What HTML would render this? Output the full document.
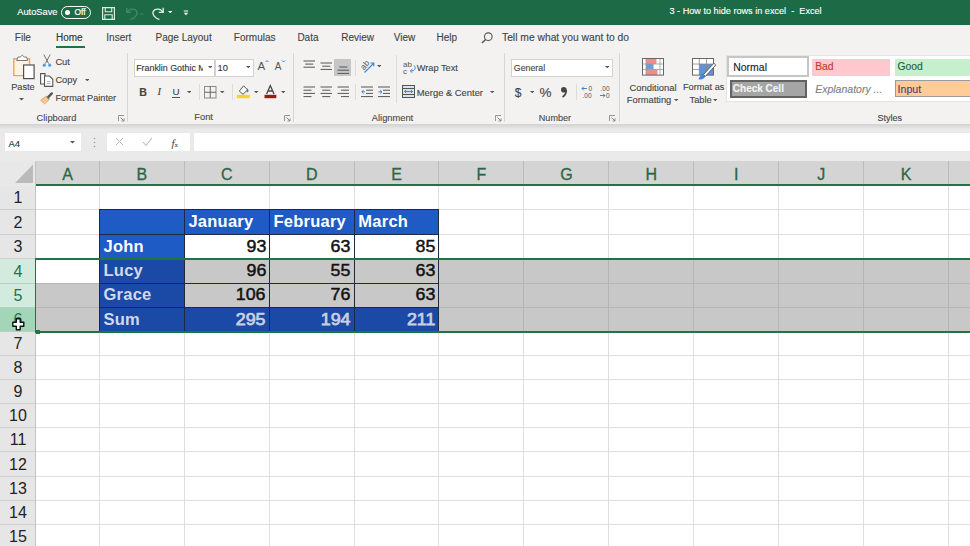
<!DOCTYPE html>
<html><head><meta charset="utf-8"><style>
*{margin:0;padding:0;box-sizing:border-box}
html,body{width:970px;height:546px;overflow:hidden;background:#f3f2f1;font-family:"Liberation Sans",sans-serif}
body{position:relative}
.a{position:absolute}
.t{position:absolute;white-space:nowrap;line-height:1}
</style></head><body>
<div class="a" style="left:0;top:0;width:970px;height:25.3px;background:#1d6b46"></div>
<div class="a" style="left:0;top:123.7px;width:970px;height:5px;background:linear-gradient(#d3d3d3,#dcdcdc 50%,#e8e8e8)"></div>
<div class="a" style="left:0;top:128.7px;width:970px;height:32.3px;background:#eaeaea"></div>
<div class="t" style="left:17.2px;top:8.13px;font-size:9.3px;color:#fff;font-weight:normal;font-style:normal;-webkit-text-stroke:0.12px #fff;">AutoSave</div>
<div class="a" style="left:61px;top:5.5px;width:30px;height:13.5px;border:1.2px solid #fff;border-radius:7px"></div>
<div class="a" style="left:65.2px;top:9.8px;width:5.2px;height:5.2px;border-radius:50%;background:#fff"></div>
<div class="t" style="left:74.6px;top:8.49px;font-size:8.4px;color:#fff;font-weight:normal;font-style:normal;-webkit-text-stroke:0.12px #fff;-webkit-text-stroke:0.2px #fff">Off</div>
<svg class="a" style="left:102px;top:7px" width="14" height="14"><path d="M0.6,0.6 H12.4 V12.4 H0.6 Z" fill="none" stroke="#dcebe2" stroke-width="1.2"/><path d="M3.3,0.6 V4.8 H9.7 V0.6 M2.8,12.4 V7.8 H10.2 V12.4" fill="none" stroke="#dcebe2" stroke-width="1.1"/></svg>
<svg class="a" style="left:125px;top:6px" width="21" height="15"><path d="M2.2,6 C4,2.5 10,2 11.8,5.5 C13,8.5 10,12 5.5,13.5" fill="none" stroke="#3f8d64" stroke-width="1.3"/><path d="M1.8,2 V6.4 H6" fill="none" stroke="#3f8d64" stroke-width="1.3"/><path d="M15,8 h3.5" stroke="#3f8d64" stroke-width="1"/></svg>
<svg class="a" style="left:152px;top:6px" width="14" height="15"><path d="M10.8,6 C9,2.5 3,2 1.2,5.5 C0,8.5 3,12 7.5,13.5" fill="none" stroke="#e6f0ea" stroke-width="1.3"/><path d="M11.2,1.8 V6.4 H6.8" fill="none" stroke="#e6f0ea" stroke-width="1.3"/></svg>
<svg class="a" style="left:167.75px;top:11.075px" width="4.5" height="2.25"><polygon points="0,0 4.5,0 2.25,2.25" fill="#fff"/></svg>
<svg class="a" style="left:182.5px;top:9.5px" width="6" height="6"><path d="M0.8,1 H5.2" stroke="#fff" stroke-width="1"/><polygon points="0.8,2.8 5.2,2.8 3,5.3" fill="#fff"/></svg>
<div class="t" style="left:669.5px;top:7.45px;font-size:9.15px;color:#fff;font-weight:normal;font-style:normal;-webkit-text-stroke:0.12px #fff;">3 - How to hide rows in excel&nbsp; -&nbsp; Excel</div>
<div class="t" style="left:14.8px;top:33.33px;font-size:10px;color:#444;font-weight:normal;font-style:normal;-webkit-text-stroke:0.12px #444;">File</div>
<div class="t" style="left:56.0px;top:33.33px;font-size:10px;color:#333;font-weight:normal;font-style:normal;-webkit-text-stroke:0.12px #333;">Home</div>
<div class="t" style="left:106.3px;top:33.33px;font-size:10px;color:#444;font-weight:normal;font-style:normal;-webkit-text-stroke:0.12px #444;">Insert</div>
<div class="t" style="left:155.5px;top:33.33px;font-size:10px;color:#444;font-weight:normal;font-style:normal;-webkit-text-stroke:0.12px #444;">Page Layout</div>
<div class="t" style="left:233.8px;top:33.33px;font-size:10px;color:#444;font-weight:normal;font-style:normal;-webkit-text-stroke:0.12px #444;">Formulas</div>
<div class="t" style="left:297.4px;top:33.33px;font-size:10px;color:#444;font-weight:normal;font-style:normal;-webkit-text-stroke:0.12px #444;">Data</div>
<div class="t" style="left:341.3px;top:33.33px;font-size:10px;color:#444;font-weight:normal;font-style:normal;-webkit-text-stroke:0.12px #444;">Review</div>
<div class="t" style="left:393.8px;top:33.33px;font-size:10px;color:#444;font-weight:normal;font-style:normal;-webkit-text-stroke:0.12px #444;">View</div>
<div class="t" style="left:436.5px;top:33.33px;font-size:10px;color:#444;font-weight:normal;font-style:normal;-webkit-text-stroke:0.12px #444;">Help</div>
<div class="a" style="left:56px;top:45.6px;width:29px;height:2px;background:#217346"></div>
<svg class="a" style="left:481px;top:32px" width="12" height="12"><circle cx="7.3" cy="4.7" r="3.8" fill="none" stroke="#555" stroke-width="1.1"/><path d="M4.6,7.4 L1,11" stroke="#555" stroke-width="1.4"/></svg>
<div class="t" style="left:502.0px;top:33.08px;font-size:10.3px;color:#444;font-weight:normal;font-style:normal;-webkit-text-stroke:0.12px #444;">Tell me what you want to do</div>
<svg class="a" style="left:12px;top:54px" width="24" height="26"><rect x="1.8" y="4.8" width="15.7" height="16.8" fill="#fdf3e3"/><path d="M11.5,21.6 H1.8 V4.8 H17.5 V11" fill="none" stroke="#f0a850" stroke-width="1.4"/><path d="M4.7,6.5 L6,3 H8.3 L10.3,1.2 L12.3,3 H14.5 L15.5,6.5 Z" fill="#fff" stroke="#777" stroke-width="1"/><rect x="11.6" y="11" width="10.5" height="13.6" fill="#fff" stroke="#505050" stroke-width="1.2"/></svg>
<div class="t" style="left:11.2px;top:82.71px;font-size:9.2px;color:#444;font-weight:normal;font-style:normal;-webkit-text-stroke:0.12px #444;">Paste</div>
<svg class="a" style="left:19.0px;top:98.05px" width="5" height="2.5"><polygon points="0,0 5,0 2.5,2.5" fill="#555"/></svg>
<svg class="a" style="left:41px;top:54px" width="12" height="14"><path d="M2.8,0.5 L7.6,9.5 M9.2,0.5 L4.4,9.5" stroke="#666" stroke-width="0.9"/><circle cx="3.3" cy="11.2" r="1.6" fill="#5b9bdc"/><circle cx="8.7" cy="11.2" r="1.6" fill="#5b9bdc"/></svg>
<div class="t" style="left:55.4px;top:57.53px;font-size:9.3px;color:#444;font-weight:normal;font-style:normal;-webkit-text-stroke:0.12px #444;">Cut</div>
<svg class="a" style="left:39.5px;top:73px" width="14" height="14"><path d="M0.6,0.6 H5 V11 H0.6 Z" fill="#fff" stroke="#555" stroke-width="1.1"/><path d="M4.5,3 H9.5 L12.8,6.3 V13.4 H4.5 Z" fill="#fff" stroke="#555" stroke-width="1.1"/><path d="M7,8.5 h3.5 M7,10.5 h3.5" stroke="#999" stroke-width="0.8"/></svg>
<div class="t" style="left:55.4px;top:76.03px;font-size:9.3px;color:#444;font-weight:normal;font-style:normal;-webkit-text-stroke:0.12px #444;">Copy</div>
<svg class="a" style="left:84.55px;top:79.175px" width="4.5" height="2.25"><polygon points="0,0 4.5,0 2.25,2.25" fill="#555"/></svg>
<svg class="a" style="left:40.3px;top:91.5px" width="14" height="13"><path d="M8.2,5.2 L11.8,1.4" stroke="#555" stroke-width="2.4" stroke-linecap="round"/><path d="M6.4,4.6 L9.2,7.4" stroke="#777" stroke-width="1.6"/><path d="M0.6,8.3 L5.6,4.4 L9,7.8 L4.6,12 Z" fill="#f5b676" stroke="#e69a50" stroke-width="0.6"/><path d="M2.6,9.2 L6.2,6.2 M4.2,10.6 L7.4,7.6" stroke="#fff3e6" stroke-width="0.8"/></svg>
<div class="t" style="left:55.4px;top:94.41px;font-size:9.2px;color:#444;font-weight:normal;font-style:normal;-webkit-text-stroke:0.12px #444;">Format Painter</div>
<div class="t" style="left:36.6px;top:113.63px;font-size:9.3px;color:#4a4a4a;font-weight:normal;font-style:normal;-webkit-text-stroke:0.12px #4a4a4a;">Clipboard</div>
<svg class="a" style="left:117.5px;top:114.5px" width="7" height="7"><path d="M0.5,6 V0.5 H6" fill="none" stroke="#8a8a8a" stroke-width="0.9"/><path d="M2.5,2.5 L6,6 M3.5,6 H6 V3.5" fill="none" stroke="#8a8a8a" stroke-width="1"/></svg>
<div class="a" style="left:127px;top:53px;width:1px;height:69px;background:#d6d6d6"></div>
<div class="a" style="left:134px;top:58.6px;width:81px;height:18px;background:#fff;border:1px solid #d2d2d2"></div>
<div class="t" style="left:136.2px;top:63.97px;font-size:8.9px;color:#333;font-weight:normal;font-style:normal;-webkit-text-stroke:0.12px #333;width:67px;overflow:hidden">Franklin Gothic M</div>
<svg class="a" style="left:207.55px;top:66.375px" width="4.5" height="2.25"><polygon points="0,0 4.5,0 2.25,2.25" fill="#555"/></svg>
<div class="a" style="left:215px;top:58.6px;width:39px;height:18px;background:#fff;border:1px solid #d2d2d2"></div>
<div class="t" style="left:217.6px;top:63.63px;font-size:9.3px;color:#333;font-weight:normal;font-style:normal;-webkit-text-stroke:0.12px #333;">10</div>
<svg class="a" style="left:245.55px;top:66.375px" width="4.5" height="2.25"><polygon points="0,0 4.5,0 2.25,2.25" fill="#555"/></svg>
<svg class="a" style="left:257px;top:59px" width="30" height="13"><text x="0.5" y="11.3" font-family="Liberation Sans" font-size="11.5" fill="#555">A</text><path d="M8.5,3 L10,1.5 L11.5,3" fill="none" stroke="#3b86d9" stroke-width="1"/><text x="17.8" y="11.3" font-family="Liberation Sans" font-size="10" fill="#555">A</text><path d="M25,1.5 L26.5,3 L28,1.5" fill="none" stroke="#3b86d9" stroke-width="1"/></svg>
<div class="t" style="left:139.2px;top:86.83px;font-size:10.6px;color:#444;font-weight:bold;font-style:normal;-webkit-text-stroke:0.12px #444;">B</div>
<div class="t" style="left:157.4px;top:86.71px;font-size:10.5px;color:#444;font-weight:normal;font-style:italic;-webkit-text-stroke:0.12px #444;font-family:'Liberation Serif'">I</div>
<div class="t" style="left:172.4px;top:86.70px;font-size:9.8px;color:#444;font-weight:normal;font-style:normal;-webkit-text-stroke:0.12px #444;">U</div>
<div class="a" style="left:172.4px;top:97.2px;width:7.5px;height:1px;background:#555"></div>
<svg class="a" style="left:186.95px;top:90.875px" width="4.5" height="2.25"><polygon points="0,0 4.5,0 2.25,2.25" fill="#555"/></svg>
<div class="a" style="left:198.5px;top:84px;width:1px;height:16px;background:#dcdcdc"></div>
<svg class="a" style="left:203.5px;top:85.5px" width="13" height="13"><rect x="0.5" y="0.5" width="11.5" height="11.5" fill="none" stroke="#8a8a8a" stroke-width="1"/><path d="M6.25,0.5 V12 M0.5,6.25 H12" stroke="#666" stroke-width="1"/></svg>
<svg class="a" style="left:220.15px;top:90.875px" width="4.5" height="2.25"><polygon points="0,0 4.5,0 2.25,2.25" fill="#555"/></svg>
<div class="a" style="left:231.6px;top:84px;width:1px;height:16px;background:#dcdcdc"></div>
<svg class="a" style="left:236px;top:84px" width="15" height="15"><path d="M3.3,7.1 L7.6,1.8 L11.6,5.9 L7,10.3 Z" fill="#fff" stroke="#555" stroke-width="1"/><path d="M11.3,4.3 C12.8,6.3 12.9,7.7 11.8,8.3 C10.7,8.4 10.3,7.2 11.3,4.3 Z" fill="#3b6fd0"/><rect x="0.8" y="10.8" width="13" height="3.4" fill="#f3d530"/></svg>
<svg class="a" style="left:254.05px;top:90.875px" width="4.5" height="2.25"><polygon points="0,0 4.5,0 2.25,2.25" fill="#555"/></svg>
<svg class="a" style="left:263.5px;top:84px" width="14" height="15"><path d="M2.6,10 L6.3,1.6 L10,10 M3.9,7 H8.7" fill="none" stroke="#4a4a4a" stroke-width="1.35"/><rect x="0.5" y="10.8" width="11.8" height="3.4" fill="#9a1b12"/></svg>
<svg class="a" style="left:280.55px;top:90.875px" width="4.5" height="2.25"><polygon points="0,0 4.5,0 2.25,2.25" fill="#555"/></svg>
<div class="t" style="left:194.3px;top:113.33px;font-size:9.3px;color:#4a4a4a;font-weight:normal;font-style:normal;-webkit-text-stroke:0.12px #4a4a4a;">Font</div>
<svg class="a" style="left:283.8px;top:114.5px" width="7" height="7"><path d="M0.5,6 V0.5 H6" fill="none" stroke="#8a8a8a" stroke-width="0.9"/><path d="M2.5,2.5 L6,6 M3.5,6 H6 V3.5" fill="none" stroke="#8a8a8a" stroke-width="1"/></svg>
<div class="a" style="left:293px;top:53px;width:1px;height:69px;background:#d6d6d6"></div>
<svg class="a" style="left:303px;top:60px" width="12.5" height="11.3"><path d="M0.5,1.0 h11.5" stroke="#555" stroke-width="1"/><path d="M2.25,4.1 h8" stroke="#555" stroke-width="1"/><path d="M0.5,7.2 h11.5" stroke="#555" stroke-width="1"/></svg>
<svg class="a" style="left:319.8px;top:62px" width="12.5" height="11.600000000000001"><path d="M0.5,1.0 h11.5" stroke="#555" stroke-width="1"/><path d="M2.25,4.2 h8" stroke="#555" stroke-width="1"/><path d="M0.5,7.4 h11.5" stroke="#555" stroke-width="1"/></svg>
<div class="a" style="left:334px;top:59px;width:17px;height:17px;background:#c6c6c6"></div>
<svg class="a" style="left:337px;top:65.5px" width="12.5" height="11.600000000000001"><path d="M2.25,1.0 h8" stroke="#555" stroke-width="1"/><path d="M0.5,4.2 h11.5" stroke="#555" stroke-width="1"/><path d="M0.5,7.4 h11.5" stroke="#555" stroke-width="1"/></svg>
<div class="a" style="left:354.6px;top:60px;width:1px;height:16px;background:#dcdcdc"></div>
<svg class="a" style="left:359px;top:58px" width="18" height="16"><text x="1" y="10" font-family="Liberation Sans" font-size="8.5" fill="#555" transform="rotate(-50 5.5 7)">ab</text><path d="M5.5,14.5 L14.5,5.5 M11.5,5 H14.8 V8.3" fill="none" stroke="#3b86d9" stroke-width="1.1"/></svg>
<svg class="a" style="left:376.55px;top:65.375px" width="4.5" height="2.25"><polygon points="0,0 4.5,0 2.25,2.25" fill="#555"/></svg>
<svg class="a" style="left:303px;top:86px" width="12.5" height="14.8"><path d="M0.5,1.0 h11.5" stroke="#555" stroke-width="1"/><path d="M0.5,4.2 h8" stroke="#555" stroke-width="1"/><path d="M0.5,7.4 h11.5" stroke="#555" stroke-width="1"/><path d="M0.5,10.600000000000001 h8" stroke="#555" stroke-width="1"/></svg>
<svg class="a" style="left:320.3px;top:86px" width="12.5" height="14.8"><path d="M0.5,1.0 h11.5" stroke="#555" stroke-width="1"/><path d="M2.25,4.2 h8" stroke="#555" stroke-width="1"/><path d="M0.5,7.4 h11.5" stroke="#555" stroke-width="1"/><path d="M2.25,10.600000000000001 h8" stroke="#555" stroke-width="1"/></svg>
<svg class="a" style="left:337.2px;top:86px" width="12.5" height="14.8"><path d="M0.5,1.0 h11.5" stroke="#555" stroke-width="1"/><path d="M4.0,4.2 h8" stroke="#555" stroke-width="1"/><path d="M0.5,7.4 h11.5" stroke="#555" stroke-width="1"/><path d="M4.0,10.600000000000001 h8" stroke="#555" stroke-width="1"/></svg>
<div class="a" style="left:355.3px;top:84px;width:1px;height:16px;background:#dcdcdc"></div>
<svg class="a" style="left:361px;top:85.5px" width="13" height="12"><path d="M0,1 h12 M5,4.2 h7 M5,7.4 h7 M0,10.6 h12" stroke="#555" stroke-width="1"/><path d="M4,5.8 H0.8 M2.5,4 L0.8,5.8 L2.5,7.6" fill="none" stroke="#3b86d9" stroke-width="1"/></svg>
<svg class="a" style="left:378px;top:85.5px" width="13" height="12"><path d="M0,1 h12 M5,4.2 h7 M5,7.4 h7 M0,10.6 h12" stroke="#555" stroke-width="1"/><path d="M0.5,5.8 H3.8 M2.2,4 L4,5.8 L2.2,7.6" fill="none" stroke="#3b86d9" stroke-width="1"/></svg>
<div class="a" style="left:396px;top:55px;width:1px;height:48px;background:#dcdcdc"></div>
<svg class="a" style="left:403px;top:60px" width="14" height="14"><text x="0" y="6.5" font-family="Liberation Sans" font-size="8" fill="#555">ab</text><text x="0" y="13.5" font-family="Liberation Sans" font-size="8" fill="#555">c</text><path d="M11.2,5.5 C13.2,8.5 12,11 7.5,11 M9.3,9.2 L7.4,11 L9.3,12.8" fill="none" stroke="#3b86d9" stroke-width="1"/></svg>
<div class="t" style="left:416.8px;top:63.71px;font-size:9.2px;color:#444;font-weight:normal;font-style:normal;-webkit-text-stroke:0.12px #444;">Wrap Text</div>
<svg class="a" style="left:401.5px;top:85px" width="13" height="13"><rect x="0.5" y="0.5" width="12" height="12" fill="#d5e4f5" stroke="#555" stroke-width="1"/><path d="M0.5,3.5 h12 M0.5,9.5 h12" stroke="#555" stroke-width="1"/><path d="M2.5,6.5 h8 M4.2,5 L2.5,6.5 L4.2,8 M8.8,5 L10.5,6.5 L8.8,8" fill="none" stroke="#3b86d9" stroke-width="1"/></svg>
<div class="t" style="left:416.8px;top:87.84px;font-size:9.4px;color:#444;font-weight:normal;font-style:normal;-webkit-text-stroke:0.12px #444;">Merge &amp; Center</div>
<svg class="a" style="left:490.25px;top:90.875px" width="4.5" height="2.25"><polygon points="0,0 4.5,0 2.25,2.25" fill="#555"/></svg>
<div class="t" style="left:371.8px;top:113.63px;font-size:9.3px;color:#4a4a4a;font-weight:normal;font-style:normal;-webkit-text-stroke:0.12px #4a4a4a;">Alignment</div>
<svg class="a" style="left:494.8px;top:114.5px" width="7" height="7"><path d="M0.5,6 V0.5 H6" fill="none" stroke="#8a8a8a" stroke-width="0.9"/><path d="M2.5,2.5 L6,6 M3.5,6 H6 V3.5" fill="none" stroke="#8a8a8a" stroke-width="1"/></svg>
<div class="a" style="left:504.3px;top:53px;width:1px;height:69px;background:#d6d6d6"></div>
<div class="a" style="left:511px;top:58.6px;width:102px;height:18px;background:#fff;border:1px solid #d2d2d2"></div>
<div class="t" style="left:513.8px;top:64.05px;font-size:8.8px;color:#444;font-weight:normal;font-style:normal;-webkit-text-stroke:0.12px #444;">General</div>
<svg class="a" style="left:604.95px;top:66.375px" width="4.5" height="2.25"><polygon points="0,0 4.5,0 2.25,2.25" fill="#555"/></svg>
<div class="t" style="left:514.8px;top:87.34px;font-size:12px;color:#444;font-weight:normal;font-style:normal;-webkit-text-stroke:0.12px #444;">$</div>
<svg class="a" style="left:529.75px;top:90.875px" width="4.5" height="2.25"><polygon points="0,0 4.5,0 2.25,2.25" fill="#555"/></svg>
<div class="t" style="left:539.6px;top:86.37px;font-size:13.5px;color:#444;font-weight:normal;font-style:normal;-webkit-text-stroke:0.12px #444;">%</div>
<svg class="a" style="left:559.5px;top:86px" width="8" height="12"><circle cx="3.8" cy="3.8" r="2.8" fill="#444"/><path d="M6.2,4 C6.5,7.5 5,9.5 2.5,11" fill="none" stroke="#444" stroke-width="1.7"/></svg>
<div class="a" style="left:576.4px;top:84px;width:1px;height:16px;background:#dcdcdc"></div>
<svg class="a" style="left:580.5px;top:85px" width="14" height="14"><path d="M1,3.5 H6 M2.8,1.7 L1,3.5 L2.8,5.3" fill="none" stroke="#3b86d9" stroke-width="1"/><text x="7.5" y="6" font-family="Liberation Sans" font-size="6.5" fill="#555">0</text><text x="1.5" y="13" font-family="Liberation Sans" font-size="6.5" fill="#555">.00</text></svg>
<svg class="a" style="left:599px;top:85px" width="14" height="14"><text x="1.5" y="6" font-family="Liberation Sans" font-size="6.5" fill="#555">.00</text><path d="M1,10.5 H6 M4.2,8.7 L6,10.5 L4.2,12.3" fill="none" stroke="#3b86d9" stroke-width="1"/><text x="7" y="13" font-family="Liberation Sans" font-size="6.5" fill="#555">0</text></svg>
<div class="t" style="left:538.8px;top:113.60px;font-size:9.1px;color:#4a4a4a;font-weight:normal;font-style:normal;-webkit-text-stroke:0.12px #4a4a4a;">Number</div>
<svg class="a" style="left:609.3px;top:114.5px" width="7" height="7"><path d="M0.5,6 V0.5 H6" fill="none" stroke="#8a8a8a" stroke-width="0.9"/><path d="M2.5,2.5 L6,6 M3.5,6 H6 V3.5" fill="none" stroke="#8a8a8a" stroke-width="1"/></svg>
<div class="a" style="left:618.6px;top:53px;width:1px;height:69px;background:#d6d6d6"></div>
<svg class="a" style="left:642px;top:57.5px" width="23" height="18"><rect x="0.5" y="0.5" width="21" height="16.6" fill="#fff"/><rect x="4" y="0.5" width="10.5" height="5.5" fill="#f28b8b"/><rect x="4" y="6" width="7.5" height="5.5" fill="#6a9fdc"/><rect x="4" y="11.5" width="11.5" height="5.6" fill="#f28b8b"/><path d="M0.5,6 h21 M0.5,11.5 h21 M4,0.5 v16.6 M18,0.5 v16.6" stroke="#999" stroke-width="0.8"/><rect x="0.5" y="0.5" width="21" height="16.6" fill="none" stroke="#666" stroke-width="1"/></svg>
<div class="t" style="left:629.6px;top:83.24px;font-size:9.4px;color:#444;font-weight:normal;font-style:normal;-webkit-text-stroke:0.12px #444;">Conditional</div>
<div class="t" style="left:626.8px;top:95.93px;font-size:9.3px;color:#444;font-weight:normal;font-style:normal;-webkit-text-stroke:0.12px #444;">Formatting</div>
<svg class="a" style="left:674.25px;top:99.175px" width="4.5" height="2.25"><polygon points="0,0 4.5,0 2.25,2.25" fill="#555"/></svg>
<svg class="a" style="left:692px;top:57.5px" width="27" height="23"><rect x="0.5" y="0.5" width="21" height="16.6" fill="#fff"/><rect x="7.3" y="6" width="14.2" height="11.1" fill="#5b95de"/><path d="M0.5,6 h21 M0.5,11.5 h21 M7.3,0.5 v16.6 M14.5,0.5 v16.6" stroke="#888" stroke-width="0.8"/><rect x="0.5" y="0.5" width="21" height="16.6" fill="none" stroke="#666" stroke-width="1"/><path d="M11.5,16.5 L21.8,5.2 L23.8,7 L13.5,18.3 Z" fill="#f4f4f4" stroke="#555" stroke-width="0.9"/><path d="M6.5,21.3 C7.5,18.5 9.5,16.5 11.8,16.6 L13.3,18.2 C12.5,20.5 10,22 6.5,21.3 Z" fill="#3f83d6"/></svg>
<div class="t" style="left:683.0px;top:83.41px;font-size:9.2px;color:#444;font-weight:normal;font-style:normal;-webkit-text-stroke:0.12px #444;">Format as</div>
<div class="t" style="left:689.5px;top:95.93px;font-size:9.3px;color:#444;font-weight:normal;font-style:normal;-webkit-text-stroke:0.12px #444;">Table</div>
<svg class="a" style="left:712.55px;top:99.175px" width="4.5" height="2.25"><polygon points="0,0 4.5,0 2.25,2.25" fill="#555"/></svg>
<div class="a" style="left:726px;top:54.5px;width:250px;height:47px;background:#fff;border:1px solid #e3e3e3"></div>
<div class="a" style="left:727.3px;top:56.2px;width:82px;height:21.3px;background:#fff;border:2.2px solid #c6c6c6"></div>
<div class="t" style="left:733.2px;top:61.51px;font-size:10.5px;color:#222;font-weight:normal;font-style:normal;-webkit-text-stroke:0.12px #222;">Normal</div>
<div class="a" style="left:812.3px;top:59px;width:77.5px;height:16.5px;background:#ffc7ce"></div>
<div class="t" style="left:815.2px;top:62.48px;font-size:10.3px;color:#c0392b;font-weight:normal;font-style:normal;-webkit-text-stroke:0.12px #c0392b;">Bad</div>
<div class="a" style="left:894.7px;top:59px;width:80px;height:16.5px;background:#c6efce"></div>
<div class="t" style="left:897.6px;top:62.48px;font-size:10.3px;color:#1f5a38;font-weight:normal;font-style:normal;-webkit-text-stroke:0.12px #1f5a38;">Good</div>
<div class="a" style="left:729.5px;top:80px;width:77.8px;height:17.6px;background:#a5a5a5;border:2.4px solid #626262"></div>
<div class="t" style="left:732.8px;top:84.13px;font-size:10px;color:#f4f4f4;font-weight:bold;font-style:normal;-webkit-text-stroke:0.12px #f4f4f4;">Check Cell</div>
<div class="t" style="left:815.2px;top:83.71px;font-size:10.5px;color:#7f7f7f;font-weight:normal;font-style:italic;-webkit-text-stroke:0.12px #7f7f7f;">Explanatory ...</div>
<div class="a" style="left:894.7px;top:80.3px;width:80px;height:17px;background:#ffcc99;border:1px solid #9b9b9b"></div>
<div class="t" style="left:897.6px;top:83.63px;font-size:10.6px;color:#3f3f76;font-weight:normal;font-style:normal;-webkit-text-stroke:0.12px #3f3f76;">Input</div>
<div class="t" style="left:877.5px;top:113.88px;font-size:9.0px;color:#444;font-weight:normal;font-style:normal;-webkit-text-stroke:0.12px #444;">Styles</div>
<div class="a" style="left:3.5px;top:132.2px;width:78.5px;height:20.3px;background:#fff;border:1px solid #e9e9e9"></div>
<div class="t" style="left:8.5px;top:138.96px;font-size:9.5px;color:#333;font-weight:normal;font-style:normal;-webkit-text-stroke:0.12px #333;">A4</div>
<svg class="a" style="left:69.8px;top:141.25px" width="5" height="2.5"><polygon points="0,0 5,0 2.5,2.5" fill="#555"/></svg>
<svg class="a" style="left:93px;top:137px" width="3" height="12"><circle cx="1.5" cy="1.5" r="0.8" fill="#999"/><circle cx="1.5" cy="5.5" r="0.8" fill="#999"/><circle cx="1.5" cy="9.5" r="0.8" fill="#999"/></svg>
<div class="a" style="left:105.5px;top:132.2px;width:85.5px;height:20.3px;background:#fff;border:1px solid #e9e9e9"></div>
<svg class="a" style="left:115px;top:137px" width="10" height="10"><path d="M1,1 L8,8 M8,1 L1,8" stroke="#bbb" stroke-width="1"/></svg>
<svg class="a" style="left:142px;top:137px" width="11" height="10"><path d="M1,5 L4,8.5 L10,1" fill="none" stroke="#bbb" stroke-width="1.1"/></svg>
<div class="t" style="left:171.5px;top:137.69px;font-size:11px;color:#555;font-weight:normal;font-style:normal;-webkit-text-stroke:0.12px #555;font-family:'Liberation Serif'"><i>f</i><span style="font-size:7px">x</span></div>
<div class="a" style="left:193px;top:132.2px;width:790px;height:20.3px;background:#fff;border:1px solid #e9e9e9"></div>
<div class="a" style="left:36.00px;top:186.00px;width:934.00px;height:360.00px;background:#fff;"></div>
<div class="a" style="left:36.00px;top:161.00px;width:934.00px;height:24.30px;background:#d4d4d4;"></div>
<div class="a" style="left:0.00px;top:161.00px;width:36.00px;height:25.00px;background:#e8e8e8;"></div>
<svg class="a" style="left:0;top:161px" width="36" height="25"><polygon points="33,3.5 33,22 15,22" fill="#bababa"/></svg>
<div class="a" style="left:0.00px;top:186.00px;width:36.00px;height:360.00px;background:#e6e6e6;"></div>
<div class="a" style="left:0.00px;top:258.80px;width:36.00px;height:48.70px;background:#d2ebde;"></div>
<div class="a" style="left:0.00px;top:307.50px;width:36.00px;height:24.30px;background:#a3d6b9;"></div>
<div class="a" style="left:99.50px;top:258.80px;width:870.50px;height:73.00px;background:#c8c8c8;"></div>
<div class="a" style="left:36.00px;top:283.20px;width:63.50px;height:48.60px;background:#c8c8c8;"></div>
<div class="a" style="left:36.00px;top:209.30px;width:934.00px;height:1.00px;background:#dfdfdf;"></div>
<div class="a" style="left:0.00px;top:209.30px;width:36.00px;height:1.00px;background:#cfcfcf;"></div>
<div class="a" style="left:36.00px;top:233.90px;width:934.00px;height:1.00px;background:#dfdfdf;"></div>
<div class="a" style="left:0.00px;top:233.90px;width:36.00px;height:1.00px;background:#cfcfcf;"></div>
<div class="a" style="left:36.00px;top:258.30px;width:934.00px;height:1.00px;background:#dfdfdf;"></div>
<div class="a" style="left:0.00px;top:258.30px;width:36.00px;height:1.00px;background:#cfcfcf;"></div>
<div class="a" style="left:36.00px;top:282.70px;width:934.00px;height:1.00px;background:#b5b5b5;"></div>
<div class="a" style="left:0.00px;top:282.70px;width:36.00px;height:1.00px;background:#b9cfc2;"></div>
<div class="a" style="left:36.00px;top:307.00px;width:934.00px;height:1.00px;background:#b5b5b5;"></div>
<div class="a" style="left:0.00px;top:307.00px;width:36.00px;height:1.00px;background:#b9cfc2;"></div>
<div class="a" style="left:36.00px;top:331.30px;width:934.00px;height:1.00px;background:#dfdfdf;"></div>
<div class="a" style="left:0.00px;top:331.30px;width:36.00px;height:1.00px;background:#b9cfc2;"></div>
<div class="a" style="left:36.00px;top:355.30px;width:934.00px;height:1.00px;background:#dfdfdf;"></div>
<div class="a" style="left:0.00px;top:355.30px;width:36.00px;height:1.00px;background:#cfcfcf;"></div>
<div class="a" style="left:36.00px;top:379.30px;width:934.00px;height:1.00px;background:#dfdfdf;"></div>
<div class="a" style="left:0.00px;top:379.30px;width:36.00px;height:1.00px;background:#cfcfcf;"></div>
<div class="a" style="left:36.00px;top:403.20px;width:934.00px;height:1.00px;background:#dfdfdf;"></div>
<div class="a" style="left:0.00px;top:403.20px;width:36.00px;height:1.00px;background:#cfcfcf;"></div>
<div class="a" style="left:36.00px;top:427.30px;width:934.00px;height:1.00px;background:#dfdfdf;"></div>
<div class="a" style="left:0.00px;top:427.30px;width:36.00px;height:1.00px;background:#cfcfcf;"></div>
<div class="a" style="left:36.00px;top:451.40px;width:934.00px;height:1.00px;background:#dfdfdf;"></div>
<div class="a" style="left:0.00px;top:451.40px;width:36.00px;height:1.00px;background:#cfcfcf;"></div>
<div class="a" style="left:36.00px;top:475.50px;width:934.00px;height:1.00px;background:#dfdfdf;"></div>
<div class="a" style="left:0.00px;top:475.50px;width:36.00px;height:1.00px;background:#cfcfcf;"></div>
<div class="a" style="left:36.00px;top:499.60px;width:934.00px;height:1.00px;background:#dfdfdf;"></div>
<div class="a" style="left:0.00px;top:499.60px;width:36.00px;height:1.00px;background:#cfcfcf;"></div>
<div class="a" style="left:36.00px;top:523.70px;width:934.00px;height:1.00px;background:#dfdfdf;"></div>
<div class="a" style="left:0.00px;top:523.70px;width:36.00px;height:1.00px;background:#cfcfcf;"></div>
<div class="a" style="left:36.00px;top:547.80px;width:934.00px;height:1.00px;background:#dfdfdf;"></div>
<div class="a" style="left:0.00px;top:547.80px;width:36.00px;height:1.00px;background:#cfcfcf;"></div>
<div class="a" style="left:99.00px;top:186.00px;width:1.00px;height:360.00px;background:#dfdfdf;"></div>
<div class="a" style="left:99.00px;top:258.80px;width:1.00px;height:73.00px;background:#b5b5b5;"></div>
<div class="a" style="left:99.00px;top:161.00px;width:1.00px;height:24.00px;background:#bcbcbc;"></div>
<div class="a" style="left:183.90px;top:186.00px;width:1.00px;height:360.00px;background:#dfdfdf;"></div>
<div class="a" style="left:183.90px;top:258.80px;width:1.00px;height:73.00px;background:#b5b5b5;"></div>
<div class="a" style="left:183.90px;top:161.00px;width:1.00px;height:24.00px;background:#bcbcbc;"></div>
<div class="a" style="left:268.90px;top:186.00px;width:1.00px;height:360.00px;background:#dfdfdf;"></div>
<div class="a" style="left:268.90px;top:258.80px;width:1.00px;height:73.00px;background:#b5b5b5;"></div>
<div class="a" style="left:268.90px;top:161.00px;width:1.00px;height:24.00px;background:#bcbcbc;"></div>
<div class="a" style="left:353.80px;top:186.00px;width:1.00px;height:360.00px;background:#dfdfdf;"></div>
<div class="a" style="left:353.80px;top:258.80px;width:1.00px;height:73.00px;background:#b5b5b5;"></div>
<div class="a" style="left:353.80px;top:161.00px;width:1.00px;height:24.00px;background:#bcbcbc;"></div>
<div class="a" style="left:438.30px;top:186.00px;width:1.00px;height:360.00px;background:#dfdfdf;"></div>
<div class="a" style="left:438.30px;top:258.80px;width:1.00px;height:73.00px;background:#b5b5b5;"></div>
<div class="a" style="left:438.30px;top:161.00px;width:1.00px;height:24.00px;background:#bcbcbc;"></div>
<div class="a" style="left:523.40px;top:186.00px;width:1.00px;height:360.00px;background:#dfdfdf;"></div>
<div class="a" style="left:523.40px;top:258.80px;width:1.00px;height:73.00px;background:#b5b5b5;"></div>
<div class="a" style="left:523.40px;top:161.00px;width:1.00px;height:24.00px;background:#bcbcbc;"></div>
<div class="a" style="left:608.40px;top:186.00px;width:1.00px;height:360.00px;background:#dfdfdf;"></div>
<div class="a" style="left:608.40px;top:258.80px;width:1.00px;height:73.00px;background:#b5b5b5;"></div>
<div class="a" style="left:608.40px;top:161.00px;width:1.00px;height:24.00px;background:#bcbcbc;"></div>
<div class="a" style="left:693.20px;top:186.00px;width:1.00px;height:360.00px;background:#dfdfdf;"></div>
<div class="a" style="left:693.20px;top:258.80px;width:1.00px;height:73.00px;background:#b5b5b5;"></div>
<div class="a" style="left:693.20px;top:161.00px;width:1.00px;height:24.00px;background:#bcbcbc;"></div>
<div class="a" style="left:778.40px;top:186.00px;width:1.00px;height:360.00px;background:#dfdfdf;"></div>
<div class="a" style="left:778.40px;top:258.80px;width:1.00px;height:73.00px;background:#b5b5b5;"></div>
<div class="a" style="left:778.40px;top:161.00px;width:1.00px;height:24.00px;background:#bcbcbc;"></div>
<div class="a" style="left:863.10px;top:186.00px;width:1.00px;height:360.00px;background:#dfdfdf;"></div>
<div class="a" style="left:863.10px;top:258.80px;width:1.00px;height:73.00px;background:#b5b5b5;"></div>
<div class="a" style="left:863.10px;top:161.00px;width:1.00px;height:24.00px;background:#bcbcbc;"></div>
<div class="a" style="left:947.90px;top:186.00px;width:1.00px;height:360.00px;background:#dfdfdf;"></div>
<div class="a" style="left:947.90px;top:258.80px;width:1.00px;height:73.00px;background:#b5b5b5;"></div>
<div class="a" style="left:947.90px;top:161.00px;width:1.00px;height:24.00px;background:#bcbcbc;"></div>
<div class="a" style="left:35.40px;top:161.00px;width:1.00px;height:385.00px;background:#c3c3c3;"></div>
<div class="a" style="left:99.50px;top:209.80px;width:84.90px;height:24.60px;background:#1f5bc4;"></div>
<div class="a" style="left:184.40px;top:209.80px;width:85.00px;height:24.60px;background:#1f5bc4;"></div>
<div class="a" style="left:269.40px;top:209.80px;width:84.90px;height:24.60px;background:#1f5bc4;"></div>
<div class="a" style="left:354.30px;top:209.80px;width:84.50px;height:24.60px;background:#1f5bc4;"></div>
<div class="a" style="left:99.50px;top:234.40px;width:84.90px;height:24.40px;background:#1f5bc4;"></div>
<div class="a" style="left:184.40px;top:234.40px;width:85.00px;height:24.40px;background:#fff;"></div>
<div class="a" style="left:269.40px;top:234.40px;width:84.90px;height:24.40px;background:#fff;"></div>
<div class="a" style="left:354.30px;top:234.40px;width:84.50px;height:24.40px;background:#fff;"></div>
<div class="a" style="left:99.50px;top:258.80px;width:84.90px;height:24.40px;background:#1b49a6;"></div>
<div class="a" style="left:184.40px;top:258.80px;width:85.00px;height:24.40px;background:#c8c8c8;"></div>
<div class="a" style="left:269.40px;top:258.80px;width:84.90px;height:24.40px;background:#c8c8c8;"></div>
<div class="a" style="left:354.30px;top:258.80px;width:84.50px;height:24.40px;background:#c8c8c8;"></div>
<div class="a" style="left:99.50px;top:283.20px;width:84.90px;height:24.30px;background:#1b49a6;"></div>
<div class="a" style="left:184.40px;top:283.20px;width:85.00px;height:24.30px;background:#c8c8c8;"></div>
<div class="a" style="left:269.40px;top:283.20px;width:84.90px;height:24.30px;background:#c8c8c8;"></div>
<div class="a" style="left:354.30px;top:283.20px;width:84.50px;height:24.30px;background:#c8c8c8;"></div>
<div class="a" style="left:99.50px;top:307.50px;width:84.90px;height:24.30px;background:#1b49a6;"></div>
<div class="a" style="left:184.40px;top:307.50px;width:85.00px;height:24.30px;background:#1b49a6;"></div>
<div class="a" style="left:269.40px;top:307.50px;width:84.90px;height:24.30px;background:#1b49a6;"></div>
<div class="a" style="left:354.30px;top:307.50px;width:84.50px;height:24.30px;background:#1b49a6;"></div>
<div class="a" style="left:98.90px;top:209.10px;width:340.50px;height:1.40px;background:#1f2a40;"></div>
<div class="a" style="left:98.90px;top:233.70px;width:340.50px;height:1.40px;background:#1f2a40;"></div>
<div class="a" style="left:98.90px;top:258.10px;width:340.50px;height:1.40px;background:#1f2a40;"></div>
<div class="a" style="left:98.90px;top:282.50px;width:340.50px;height:1.40px;background:#1f2a40;"></div>
<div class="a" style="left:98.90px;top:306.80px;width:340.50px;height:1.40px;background:#1f2a40;"></div>
<div class="a" style="left:98.90px;top:331.10px;width:340.50px;height:1.40px;background:#1f2a40;"></div>
<div class="a" style="left:98.80px;top:209.20px;width:1.40px;height:123.20px;background:#1f2a40;"></div>
<div class="a" style="left:183.70px;top:209.20px;width:1.40px;height:123.20px;background:#1f2a40;"></div>
<div class="a" style="left:268.70px;top:209.20px;width:1.40px;height:123.20px;background:#1f2a40;"></div>
<div class="a" style="left:353.60px;top:209.20px;width:1.40px;height:123.20px;background:#1f2a40;"></div>
<div class="a" style="left:438.10px;top:209.20px;width:1.40px;height:123.20px;background:#1f2a40;"></div>
<div class="t" style="left:188.40px;top:213.33px;font-size:16.5px;font-weight:bold;color:#fff;letter-spacing:0.25px;">January</div>
<div class="t" style="left:273.40px;top:213.33px;font-size:16.5px;font-weight:bold;color:#fff;letter-spacing:0.25px;">February</div>
<div class="t" style="left:358.30px;top:213.33px;font-size:16.5px;font-weight:bold;color:#fff;letter-spacing:0.25px;">March</div>
<div class="t" style="left:103.50px;top:237.73px;font-size:16.5px;font-weight:bold;color:#fff;letter-spacing:0.25px;">John</div>
<div class="t" style="left:103.50px;top:262.13px;font-size:16.5px;font-weight:bold;color:#d3d9e8;letter-spacing:0.25px;">Lucy</div>
<div class="t" style="left:103.50px;top:286.43px;font-size:16.5px;font-weight:bold;color:#d3d9e8;letter-spacing:0.25px;">Grace</div>
<div class="t" style="left:103.50px;top:310.73px;font-size:16.5px;font-weight:bold;color:#d3d9e8;letter-spacing:0.25px;">Sum</div>
<div class="t" style="right:704.10px;top:237.73px;font-size:16.5px;font-weight:normal;color:#111;transform:scaleX(1.08);transform-origin:right top;-webkit-text-stroke:0.45px #111;">93</div>
<div class="t" style="right:619.20px;top:237.73px;font-size:16.5px;font-weight:normal;color:#111;transform:scaleX(1.08);transform-origin:right top;-webkit-text-stroke:0.45px #111;">63</div>
<div class="t" style="right:534.70px;top:237.73px;font-size:16.5px;font-weight:normal;color:#111;transform:scaleX(1.08);transform-origin:right top;-webkit-text-stroke:0.45px #111;">85</div>
<div class="t" style="right:704.10px;top:262.13px;font-size:16.5px;font-weight:normal;color:#111;transform:scaleX(1.08);transform-origin:right top;-webkit-text-stroke:0.45px #111;">96</div>
<div class="t" style="right:619.20px;top:262.13px;font-size:16.5px;font-weight:normal;color:#111;transform:scaleX(1.08);transform-origin:right top;-webkit-text-stroke:0.45px #111;">55</div>
<div class="t" style="right:534.70px;top:262.13px;font-size:16.5px;font-weight:normal;color:#111;transform:scaleX(1.08);transform-origin:right top;-webkit-text-stroke:0.45px #111;">63</div>
<div class="t" style="right:704.10px;top:286.43px;font-size:16.5px;font-weight:normal;color:#111;transform:scaleX(1.08);transform-origin:right top;-webkit-text-stroke:0.45px #111;">106</div>
<div class="t" style="right:619.20px;top:286.43px;font-size:16.5px;font-weight:normal;color:#111;transform:scaleX(1.08);transform-origin:right top;-webkit-text-stroke:0.45px #111;">76</div>
<div class="t" style="right:534.70px;top:286.43px;font-size:16.5px;font-weight:normal;color:#111;transform:scaleX(1.08);transform-origin:right top;-webkit-text-stroke:0.45px #111;">63</div>
<div class="t" style="right:704.10px;top:310.73px;font-size:16.5px;font-weight:normal;color:#c8d0e2;transform:scaleX(1.08);transform-origin:right top;-webkit-text-stroke:0.75px #c8d0e2;">295</div>
<div class="t" style="right:619.20px;top:310.73px;font-size:16.5px;font-weight:normal;color:#c8d0e2;transform:scaleX(1.08);transform-origin:right top;-webkit-text-stroke:0.75px #c8d0e2;">194</div>
<div class="t" style="right:534.70px;top:310.73px;font-size:16.5px;font-weight:normal;color:#c8d0e2;transform:scaleX(1.08);transform-origin:right top;-webkit-text-stroke:0.75px #c8d0e2;">211</div>
<div class="a" style="left:36.00px;top:257.90px;width:934.00px;height:1.80px;background:#217346;"></div>
<div class="a" style="left:36.00px;top:330.90px;width:934.00px;height:1.80px;background:#217346;"></div>
<div class="a" style="left:35.10px;top:257.90px;width:1.40px;height:74.80px;background:#217346;"></div>
<div class="a" style="left:35.50px;top:330.30px;width:4.00px;height:3.50px;background:#217346;"></div>
<div class="a" style="left:36.00px;top:184.20px;width:934.00px;height:2.00px;background:#217346;"></div>
<div class="t" style="left:47.70px;width:40px;text-align:center;top:167px;font-size:16px;color:#2b6747;-webkit-text-stroke:0.3px #2b6747">A</div>
<div class="t" style="left:121.95px;width:40px;text-align:center;top:167px;font-size:16px;color:#2b6747;-webkit-text-stroke:0.3px #2b6747">B</div>
<div class="t" style="left:206.90px;width:40px;text-align:center;top:167px;font-size:16px;color:#2b6747;-webkit-text-stroke:0.3px #2b6747">C</div>
<div class="t" style="left:291.85px;width:40px;text-align:center;top:167px;font-size:16px;color:#2b6747;-webkit-text-stroke:0.3px #2b6747">D</div>
<div class="t" style="left:376.55px;width:40px;text-align:center;top:167px;font-size:16px;color:#2b6747;-webkit-text-stroke:0.3px #2b6747">E</div>
<div class="t" style="left:461.35px;width:40px;text-align:center;top:167px;font-size:16px;color:#2b6747;-webkit-text-stroke:0.3px #2b6747">F</div>
<div class="t" style="left:546.40px;width:40px;text-align:center;top:167px;font-size:16px;color:#2b6747;-webkit-text-stroke:0.3px #2b6747">G</div>
<div class="t" style="left:631.30px;width:40px;text-align:center;top:167px;font-size:16px;color:#2b6747;-webkit-text-stroke:0.3px #2b6747">H</div>
<div class="t" style="left:716.30px;width:40px;text-align:center;top:167px;font-size:16px;color:#2b6747;-webkit-text-stroke:0.3px #2b6747">I</div>
<div class="t" style="left:801.25px;width:40px;text-align:center;top:167px;font-size:16px;color:#2b6747;-webkit-text-stroke:0.3px #2b6747">J</div>
<div class="t" style="left:886.00px;width:40px;text-align:center;top:167px;font-size:16px;color:#2b6747;-webkit-text-stroke:0.3px #2b6747">K</div>
<div class="t" style="left:0;width:36px;text-align:center;top:190.30px;font-size:16px;color:#222">1</div>
<div class="t" style="left:0;width:36px;text-align:center;top:214.90px;font-size:16px;color:#222">2</div>
<div class="t" style="left:0;width:36px;text-align:center;top:239.30px;font-size:16px;color:#222">3</div>
<div class="t" style="left:0;width:36px;text-align:center;top:263.70px;font-size:16px;color:#217346">4</div>
<div class="t" style="left:0;width:36px;text-align:center;top:288.00px;font-size:16px;color:#217346">5</div>
<div class="t" style="left:0;width:36px;text-align:center;top:312.30px;font-size:16px;color:#217346">6</div>
<div class="t" style="left:0;width:36px;text-align:center;top:336.30px;font-size:16px;color:#222">7</div>
<div class="t" style="left:0;width:36px;text-align:center;top:360.30px;font-size:16px;color:#222">8</div>
<div class="t" style="left:0;width:36px;text-align:center;top:384.20px;font-size:16px;color:#222">9</div>
<div class="t" style="left:0;width:36px;text-align:center;top:408.30px;font-size:16px;color:#222">10</div>
<div class="t" style="left:0;width:36px;text-align:center;top:432.40px;font-size:16px;color:#222">11</div>
<div class="t" style="left:0;width:36px;text-align:center;top:456.50px;font-size:16px;color:#222">12</div>
<div class="t" style="left:0;width:36px;text-align:center;top:480.60px;font-size:16px;color:#222">13</div>
<div class="t" style="left:0;width:36px;text-align:center;top:504.70px;font-size:16px;color:#222">14</div>
<div class="t" style="left:0;width:36px;text-align:center;top:528.80px;font-size:16px;color:#222">15</div>
<svg class="a" style="left:11.6px;top:318.2px" width="13" height="12.5"><path d="M4.3,0.8 H8.2 V4.3 H11.8 V8.2 H8.2 V11.7 H4.3 V8.2 H0.8 V4.3 H4.3 Z" fill="#fff" stroke="#111" stroke-width="1.4" stroke-linejoin="round"/></svg>
</body></html>
